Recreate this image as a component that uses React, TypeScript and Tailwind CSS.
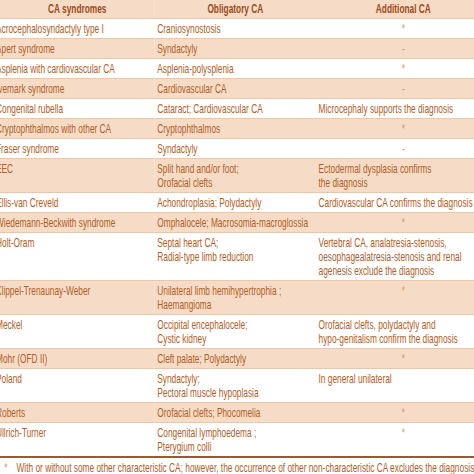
import React from 'react';

type Row = {
  name: string;
  obligatory: string[];
  additional: string[];
  center?: boolean;
  tan?: boolean;
};

const rows: Row[] = [
  { name: 'Acrocephalosyndactyly type I', obligatory: ['Craniosynostosis'], additional: ['*'], center: true },
  { name: 'Apert syndrome', obligatory: ['Syndactyly'], additional: ['-'], center: true, tan: true },
  { name: 'Asplenia with cardiovascular CA', obligatory: ['Asplenia-polysplenia'], additional: ['*'], center: true },
  { name: 'Ivemark syndrome', obligatory: ['Cardiovascular CA'], additional: ['-'], center: true, tan: true },
  { name: 'Congenital rubella', obligatory: ['Cataract; Cardiovascular CA'], additional: ['Microcephaly supports the diagnosis'] },
  { name: 'Cryptophthalmos with other CA', obligatory: ['Cryptophthalmos'], additional: ['*'], center: true, tan: true },
  { name: 'Fraser syndrome', obligatory: ['Syndactyly'], additional: ['-'], center: true },
  { name: 'EEC', obligatory: ['Split hand and/or foot;', 'Orofacial clefts'], additional: ['Ectodermal dysplasia confirms', 'the diagnosis'], tan: true },
  { name: 'Ellis-van Creveld', obligatory: ['Achondroplasia; Polydactyly'], additional: ['Cardiovascular CA confirms the diagnosis'] },
  { name: 'Wiedemann-Beckwith syndrome', obligatory: ['Omphalocele; Macrosomia-macroglossia'], additional: ['*'], center: true, tan: true },
  { name: 'Holt-Oram', obligatory: ['Septal heart CA;', 'Radial-type limb reduction'], additional: ['Vertebral CA, analatresia-stenosis,', 'oesophagealatresia-stenosis and renal', 'agenesis exclude the diagnosis'] },
  { name: 'Klippel-Trenaunay-Weber', obligatory: ['Unilateral limb hemihypertrophia ;', 'Haemangioma'], additional: ['*'], center: true, tan: true },
  { name: 'Meckel', obligatory: ['Occipital encephalocele;', 'Cystic kidney'], additional: ['Orofacial clefts, polydactyly and', 'hypo-genitalism confirm the diagnosis'] },
  { name: 'Mohr (OFD II)', obligatory: ['Cleft palate; Polydactyly'], additional: ['*'], center: true, tan: true },
  { name: 'Poland', obligatory: ['Syndactyly;', 'Pectoral muscle hypoplasia'], additional: ['In general unilateral'] },
  { name: 'Roberts', obligatory: ['Orofacial clefts; Phocomelia'], additional: ['*'], center: true, tan: true },
  { name: 'Ullrich-Turner', obligatory: ['Congenital lymphoedema ;', 'Pterygium colli'], additional: ['*'], center: true },
];

const font = { fontFamily: '"Liberation Sans", Arial, sans-serif' };

export default function App() {
  return (
    <div className="w-[474px] h-[474px] overflow-hidden bg-white text-[#b25d27]" style={font}>
      {/* the source uses a condensed face; squeeze the whole table horizontally */}
      <div className="-ml-[4.5px] w-[773px] origin-top-left scale-x-[0.64] text-[13px] leading-[14px] whitespace-nowrap">
        <table className="w-[773px] border-collapse table-fixed">
          <colgroup>
            <col className="w-[248px]" />
            <col className="w-[252px]" />
            <col className="w-[273px]" />
          </colgroup>
          <thead>
            <tr className="bg-[#f6dcc6] text-[#9e4a1a] h-[18.5px]">
              <th className="text-center font-bold pl-[6px]">CA syndromes</th>
              <th className="text-center font-bold">Obligatory CA</th>
              <th className="text-center font-bold">Additional CA</th>
            </tr>
          </thead>
          <tbody>
            {rows.map((r) => (
              <tr key={r.name} className={`${r.tan ? 'bg-[#f6dcc6]' : 'bg-white'} border-t border-[#e8c7aa] align-top`}>
                <td className="pl-0 py-[2.5px]">{r.name}</td>
                <td className="pl-[4px] py-[2.5px]">
                  {r.obligatory.map((l) => (
                    <div key={l}>{l}</div>
                  ))}
                </td>
                <td className={`${r.center ? 'text-center text-[#d3966b]' : 'pl-[4px]'} py-[2.5px]`}>
                  {r.additional.map((l) => (
                    <div key={l}>{l}</div>
                  ))}
                </td>
              </tr>
            ))}
          </tbody>
        </table>
        <div className="border-t-2 border-[#a4552a] flex pl-[13px] pt-[2px] leading-[16px]">
          <span className="w-[19px] text-[#d3966b]">*</span>
          <span>With or without some other characteristic CA; however, the occurrence of other non-characteristic CA excludes the diagnosis</span>
        </div>
      </div>
    </div>
  );
}
